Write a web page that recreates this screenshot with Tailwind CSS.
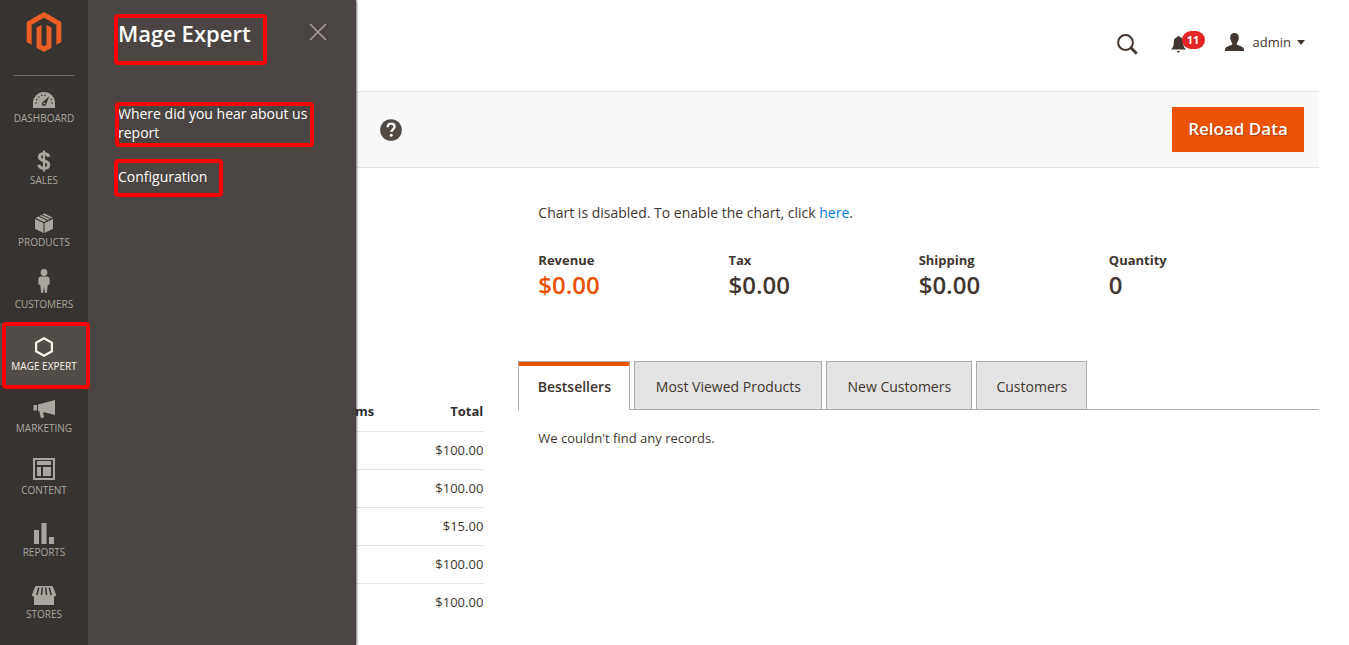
<!DOCTYPE html>
<html lang="en">
<head>
    <meta charset="UTF-8">
    <title>Dashboard / Magento Admin</title>
    <script src="https://cdn.jsdelivr.net/npm/@tailwindcss/browser@4"></script>
</head>
<body class="bg-white text-[#41362f] text-sm font-['Open_Sans','Noto_Sans',sans-serif]">
    <div class="flex min-h-screen relative">

        <!-- Main menu -->
        <aside class="w-[88px] shrink-0 bg-[#373330] flex flex-col relative z-20">
            <a href="#" title="Magento Admin Panel" class="h-[75px] pt-3 flex justify-center items-start shrink-0">
                <svg class="w-[36px] h-[40px]" viewBox="1.6 0 20.8 24" fill="#eb5e25"><path d="M12 24l-4.455-2.572v-12l2.97-1.715v12.001l1.485.902 1.485-.902V7.713l2.971 1.715v12L12 24zM22.391 6v12l-2.969 1.714V7.713L12 3.43 4.574 7.713v12.001L1.609 18V6L12 0l10.391 6z"/></svg>
            </a>
            <nav class="text-[10px] leading-[14px] text-[#aaa69f] uppercase flex flex-col">
                <a href="#" class="h-[62px] flex flex-col items-center">
                    <span class="w-[60px] border-t border-[#736963]"></span>
                    <span class="h-[35px] flex items-center pt-3">
                        <svg class="w-[22px] h-[16px]" viewBox="0 0 22 16" fill="currentColor">
                            <path d="M0 16V11a11 11 0 0 1 22 0v5z"/>
                            <g fill="#373330">
                                <circle cx="3" cy="11" r=".8"/><circle cx="3.7" cy="7.6" r=".8"/><circle cx="5.8" cy="5" r=".8"/><circle cx="8.8" cy="3.4" r=".8"/><circle cx="12" cy="3.2" r=".8"/><circle cx="18.4" cy="7.6" r=".8"/><circle cx="19" cy="11" r=".8"/>
                                <path d="M16.3 4.3l-3 7.6a2.3 2.3 0 1 1-3.6-2z"/>
                            </g>
                            <circle cx="11.2" cy="11.6" r="1"/>
                        </svg>
                    </span>
                    <span>Dashboard</span>
                </a>
                <a href="#" class="h-[62px] flex flex-col items-center">
                    <span class="h-[36px] flex items-center pt-3">
                        <svg class="w-[14px] h-[22px]" viewBox="0 0 14 22" fill="none" stroke="currentColor" stroke-width="3">
                            <path d="M11.8 6.8C11.4 4.8 9.6 3.7 7 3.7S2.4 4.9 2.4 7.1c0 2.4 2 3 4.6 3.7s4.8 1.500 4.800 4c0 2.300-2 3.500-4.800 3.500S2.200 17 1.800 14.800"/>
                            <path d="M7 .5v21" stroke-width="2.200"/>
                        </svg>
                    </span>
                    <span>Sales</span>
                </a>
                <a href="#" class="h-[62px] flex flex-col items-center">
                    <span class="h-[36px] flex items-center pt-3">
                        <svg class="w-[18px] h-[20px]" viewBox="0 0 18 20" fill="currentColor">
                            <path d="M0 6l8.500 4v10L0 15.800zM18 6l-8.500 4v10l8.500-4.200z"/>
                            <path d="M.6 4.900L3.400 3.500l8.400 4L9 8.900zM4.700 2.900L6.300 2.100l8.500 4-1.700.8zM7.500 1.500L9.500.3l8 4.500-1.500.8z"/>
                        </svg>
                    </span>
                    <span>Products</span>
                </a>
                <a href="#" class="h-[62px] flex flex-col items-center">
                    <span class="h-[36px] flex items-center pt-1">
                        <svg class="w-[12px] h-[24px]" viewBox="0 0 12 24" fill="currentColor">
                            <circle cx="6" cy="3.500" r="3.400"/>
                            <path d="M3 7.500h6c1.800 0 2.600 1 2.600 3v4.500c0 1.200-1.400 1.200-1.400 0l-.5 1.500L8.800 24H7L6 18l-1 6H3.200l-.9-7.500L1.800 15c0 1.200-1.400 1.200-1.400 0v-4.500c0-2 .8-3 2.600-3z"/>
                        </svg>
                    </span>
                    <span>Customers</span>
                </a>
                <a href="#" class="h-[62px] flex flex-col items-center bg-[#524d49] text-[#f7f3eb]">
                    <span class="h-[36px] flex items-center pt-3">
                        <svg class="w-[18px] h-[20px]" viewBox="0 0 18 20" fill="none" stroke="currentColor" stroke-width="2.200"><path d="M9 1.300l7.900 4.400v8.600L9 18.700l-7.900-4.400V5.700z"/></svg>
                    </span>
                    <span>Mage Expert</span>
                </a>
                <a href="#" class="h-[62px] flex flex-col items-center">
                    <span class="h-[36px] flex items-center pt-3">
                        <svg class="w-[22px] h-[18px]" viewBox="0 0 22 18" fill="currentColor">
                            <path d="M.5 5h3.400v5.600H.5zM4.900 4.400L22 0v15L11.500 12.200c-.8.300-1.600.5-1.400 1.300l1 3.500c-1 .8-2 1-3.200 1L6.200 11H4.900z"/>
                        </svg>
                    </span>
                    <span>Marketing</span>
                </a>
                <a href="#" class="h-[62px] flex flex-col items-center">
                    <span class="h-[36px] flex items-center pt-2">
                        <svg class="w-[22px] h-[22px]" viewBox="0 0 22 22" fill="currentColor">
                            <path fill-rule="evenodd" d="M0 0h22v22H0zM2 2v18h18V2z"/>
                            <path d="M4 3h14v4H4zM4 9h4v9H4zM10 9h8v9h-8z"/>
                        </svg>
                    </span>
                    <span>Content</span>
                </a>
                <a href="#" class="h-[62px] flex flex-col items-center">
                    <span class="h-[36px] flex items-center pt-3">
                        <svg class="w-[20px] h-[21px]" viewBox="0 0 20 21" fill="currentColor"><path d="M0 7h5v14H0zM7.500 0h5v21h-5zM15 14h5v7h-5z"/></svg>
                    </span>
                    <span>Reports</span>
                </a>
                <a href="#" class="h-[62px] flex flex-col items-center">
                    <span class="h-[36px] flex items-center pt-3">
                        <svg class="w-[24px] h-[19px]" viewBox="0 0 24 19" fill="currentColor">
                            <path d="M3.500 0h17L24 8.500c0 1.200-.8 2-2 2.200V19H2v-8.300C.8 10.500 0 9.700 0 8.500z"/>
                            <path d="M6.800 1.500L4.800 9M10.300 1.500L9.500 9M13.700 1.500l.8 7.500M17.200 1.500l2 7.500" stroke="#373330" stroke-width="1.500" fill="none"/>
                        </svg>
                    </span>
                    <span>Stores</span>
                </a>
            </nav>
            <div class="absolute left-[2px] top-[322px] w-[88px] h-[67px] border-4 border-[#fe0000] rounded-sm"></div>
        </aside>

        <!-- Submenu -->
        <div class="absolute z-10 left-[88px] top-0 bottom-0 w-[268px] bg-[#4a4542] text-white shadow-[0_0_3px_#000]">
            <div class="flex justify-between pl-[30px] pr-7 pt-[18px]">
                <h2 class="text-[22px] leading-[30px] font-semibold">Mage Expert</h2>
                <button type="button" title="Close" class="text-[#a79d95] w-5 h-7 flex items-center justify-center">
                    <svg class="w-[18px] h-[18px]" viewBox="0 0 18 18" fill="none" stroke="currentColor" stroke-width="1.600"><path d="M1 1l16 16M17 1L1 17"/></svg>
                </button>
            </div>
            <ul class="pl-[30px] pr-10 pt-14 leading-[19px] space-y-[25px]">
                <li><a href="#" class="block">Where did you hear about us report</a></li>
                <li><a href="#" class="block">Configuration</a></li>
            </ul>
            <div class="absolute left-[26px] top-[14px] w-[153px] h-[51px] border-4 border-[#fe0000] rounded-sm"></div>
            <div class="absolute left-[27px] top-[102px] w-[199px] h-[45px] border-4 border-[#fe0000] rounded-sm"></div>
            <div class="absolute left-[26px] top-[159px] w-[109px] h-[38px] border-4 border-[#fe0000] rounded-sm"></div>
        </div>

        <!-- Page -->
        <div class="flex-1 pl-[30px] pr-[30px]">
            <header class="h-[91px] flex justify-end items-start pt-[30px] pr-[14px]">
                <button type="button" title="Search" class="h-[28px] flex items-center">
                    <svg class="w-[21px] h-[21px]" viewBox="0 0 21 21" fill="none" stroke="#41362f"><circle cx="8.500" cy="8.500" r="7.400" stroke-width="2"/><path d="M13.800 13.800l6 6" stroke-width="2.800"/></svg>
                </button>
                <button type="button" title="Notifications" class="relative ml-[33px] h-[28px] w-[34px] flex items-center">
                    <svg class="w-[15px] h-[17px]" viewBox="0 0 15 17" fill="#41362f"><path d="M7.500 0c.8 0 1.200.5 1.200 1.100 2.400.6 3.500 2.400 3.500 5 0 4 .8 5.400 2.800 7.400H0c2-2 2.800-3.400 2.800-7.400 0-2.600 1.100-4.400 3.500-5C6.300.5 6.700 0 7.500 0zM6 15h3c0 2-3 2-3 0z"/></svg>
                    <span class="absolute top-px left-[11px] w-[23px] h-[18px] rounded-full bg-[#e22626] text-white text-[11px] leading-[18px] font-bold text-center">11</span>
                </button>
                <button type="button" class="ml-5 h-6 flex items-center text-[13px]">
                    <svg class="w-[19px] h-[18px] mr-[9px]" viewBox="0 0 19 18" fill="#41362f"><path d="M9.500 0c2.800 0 4.300 1.700 4.300 4.500 0 2.300-.8 4.200-2 5.400v1.600c.6 1 6 1.800 6.800 3.500.4.800.4 2 .4 3H0c0-1 0-2.200.4-3 .8-1.700 6.200-2.500 6.800-3.500V9.900c-1.200-1.200-2-3.100-2-5.400C5.200 1.700 6.700 0 9.500 0z"/></svg>
                    admin
                    <svg class="w-2 h-[5px] ml-[6px]" viewBox="0 0 8 5" fill="#41362f"><path d="M0 0h8L4 5z"/></svg>
                </button>
            </header>

            <div class="h-[77px] bg-[#f8f8f8] border-y border-[#e3e3e3] flex items-center justify-between pl-[262px] pr-[15px]">
                <button type="button" title="Help">
                    <svg class="w-[22px] h-[22px]" viewBox="0 0 22 22"><circle cx="11" cy="11" r="10.800" fill="#514943"/><path d="M7.600 8.300c0-2.400 1.500-3.600 3.500-3.600s3.500 1.200 3.500 3.100c0 2.500-3.300 2.500-3.300 5.200" fill="none" stroke="#fff" stroke-width="2.300"/><circle cx="11.200" cy="16.200" r="1.500" fill="#fff"/></svg>
                </button>
                <button type="button" class="bg-[#eb5202] text-white text-[17px] leading-[25px] font-semibold w-[132px] h-[45px] pb-[2px] text-center [text-shadow:1px_1px_0_rgba(0,0,0,0.25)]">Reload Data</button>
            </div>

            <main class="flex">
                <section class="w-1/3 pr-[35px] pt-[223px]">
                    <table class="w-full text-[13px] leading-[18px] text-right">
                        <thead>
                            <tr class="h-10 border-b border-[#e3e3e3] font-bold text-[#303030]">
                                <th>Items</th>
                                <th class="w-[109px]">Total</th>
                            </tr>
                        </thead>
                        <tbody>
                            <tr class="h-[38px] border-b border-[#e3e3e3]"><td></td><td>$100.00</td></tr>
                            <tr class="h-[38px] border-b border-[#e3e3e3]"><td></td><td>$100.00</td></tr>
                            <tr class="h-[38px] border-b border-[#e3e3e3]"><td></td><td>$15.00</td></tr>
                            <tr class="h-[38px] border-b border-[#e3e3e3]"><td></td><td>$100.00</td></tr>
                            <tr class="h-[38px]"><td></td><td>$100.00</td></tr>
                        </tbody>
                    </table>
                </section>

                <section class="w-2/3 pt-[35px]">
                    <p class="px-5 leading-5">Chart is disabled. To enable the chart, click <a href="#" class="text-[#007bdb]">here</a>.</p>
                    <dl class="grid grid-cols-4 px-5 mt-7">
                        <div>
                            <dt class="text-[13px] leading-[18px] font-bold">Revenue</dt>
                            <dd class="text-[24px] leading-[32px] font-semibold text-[#eb5202]">$0.00</dd>
                        </div>
                        <div>
                            <dt class="text-[13px] leading-[18px] font-bold">Tax</dt>
                            <dd class="text-[24px] leading-[32px] font-semibold">$0.00</dd>
                        </div>
                        <div>
                            <dt class="text-[13px] leading-[18px] font-bold">Shipping</dt>
                            <dd class="text-[24px] leading-[32px] font-semibold">$0.00</dd>
                        </div>
                        <div>
                            <dt class="text-[13px] leading-[18px] font-bold">Quantity</dt>
                            <dd class="text-[24px] leading-[32px] font-semibold">0</dd>
                        </div>
                    </dl>

                    <div class="mt-[60px] flex gap-1 border-b border-[#adadad] h-[49px]" role="tablist">
                        <button type="button" role="tab" class="w-[112px] h-[49px] bg-white border border-b-0 border-[#adadad] font-semibold flex flex-col">
                            <span class="w-full h-1 bg-[#eb5202]"></span>
                            <span class="flex-1 w-full flex items-center justify-center pb-[2px]">Bestsellers</span>
                        </button>
                        <button type="button" role="tab" class="w-[188px] bg-[#e3e3e3] border border-b-0 border-[#adadad] pt-[2px]">Most Viewed Products</button>
                        <button type="button" role="tab" class="w-[146px] bg-[#e3e3e3] border border-b-0 border-[#adadad] pt-[2px]">New Customers</button>
                        <button type="button" role="tab" class="w-[111px] bg-[#e3e3e3] border border-b-0 border-[#adadad] pt-[2px]">Customers</button>
                    </div>
                    <p class="px-5 mt-[19px] text-[13px] leading-[18px]">We couldn't find any records.</p>
                </section>
            </main>
        </div>
    </div>
</body>
</html>
